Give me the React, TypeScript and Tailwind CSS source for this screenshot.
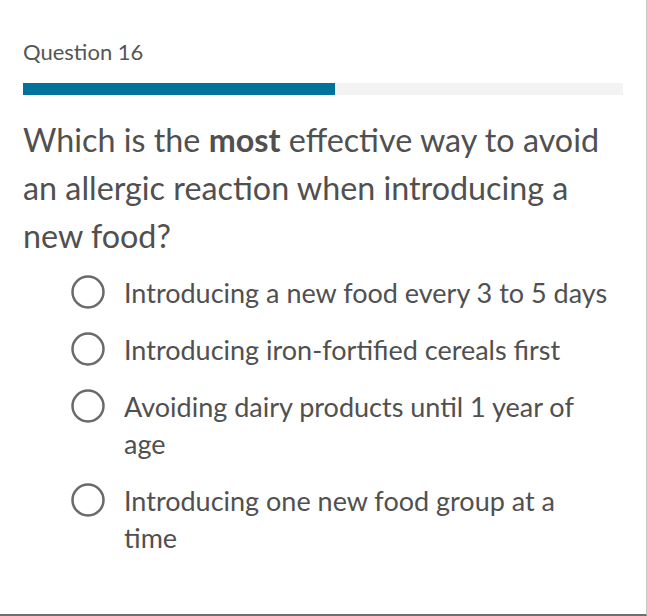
const options = [
  'Introducing a new food every 3 to 5 days',
  'Introducing iron-fortified cereals first',
  'Avoiding dairy products until 1 year of age',
  'Introducing one new food group at a time',
];

function RadioCircle() {
  return (
    <svg width="34" height="34" viewBox="0 0 34 34" className="shrink-0">
      <circle cx="17" cy="17" r="15.5" fill="none" stroke="#6a6a6a" strokeWidth="2.5" />
    </svg>
  );
}

export default function App() {
  return (
    <div
      className="w-[647px] h-[616px] bg-white border-r border-r-[#c9c9c9] border-b-2 border-b-[#6e6e6e] pl-[23px] pr-[23px] pt-[36px] text-[#505050]"
      style={{ fontFamily: 'Lato, "Open Sans", sans-serif' }}
    >
      {/* Header */}
      <p className="text-[22px] leading-[32px] text-[#555555]">Question 16</p>

      {/* Progress */}
      <div className="mt-[15px] h-[12px] w-[600px] bg-[#f3f3f3] flex">
        <div className="h-full w-[312px] bg-[#00739d]" />
      </div>

      {/* Question */}
      <h1 className="mt-[21px] text-[32.3px] leading-[48px] font-normal">
        Which is the <b className="font-bold">most</b> effective way to avoid an allergic reaction when
        introducing a new food?
      </h1>

      {/* Options */}
      <div className="mt-[14px] pl-[48px] flex flex-col gap-[20px]">
        {options.map((opt) => (
          <label key={opt} className="flex items-start gap-[19px] cursor-pointer">
            <div className="pt-[1px]">
              <RadioCircle />
            </div>
            <span className="text-[27px] leading-[37px] w-[486px]">{opt}</span>
          </label>
        ))}
      </div>
    </div>
  );
}
